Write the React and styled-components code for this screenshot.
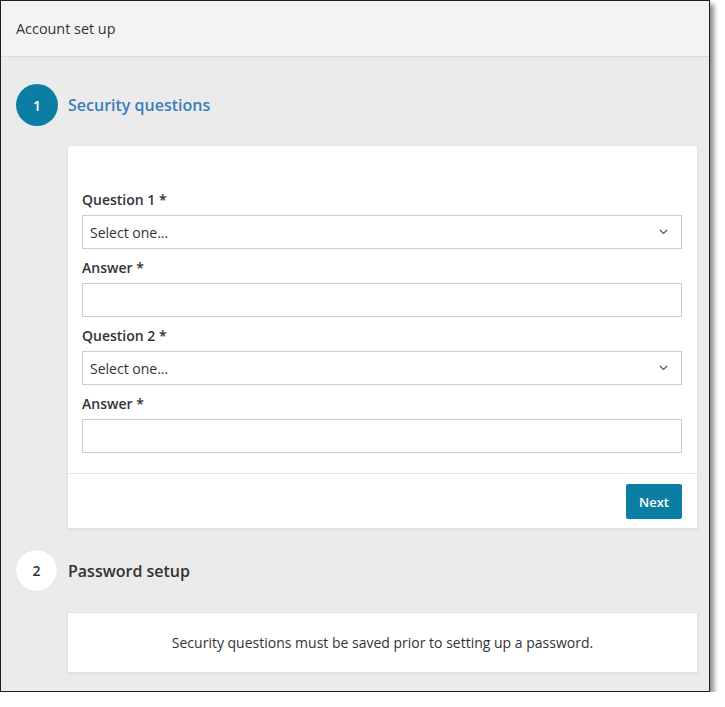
import React from 'react';
import styled, { createGlobalStyle } from 'styled-components';

const GlobalStyle = createGlobalStyle`
  body {
    margin: 0;
    background: #fff;
    font-family: "Open Sans", "Noto Sans", sans-serif;
    color: #333;
  }
`;

const Frame = styled.div`
  width: 708px;
  height: 690px;
  border: 1px solid #1e1e1e;
  background: #ebebeb;
  box-shadow: 4px 4px 5px rgba(0, 0, 0, 0.45);
  display: flex;
  flex-direction: column;
  overflow: hidden;
`;

const Header = styled.div`
  height: 55px;
  background: #f3f3f3;
  border-bottom: 1px solid #dadada;
  display: flex;
  align-items: center;
  padding: 0 15px;
  font-size: 14.4px;
  color: #333;
`;

const Content = styled.div`
  padding: 27px 11px 0 15px;
  display: flex;
  flex-direction: column;
`;

const StepHead = styled.div`
  display: flex;
  align-items: center;
  gap: ${p => (p.$active ? 10 : 11)}px;
  margin-top: ${p => p.$top || 0}px;
`;

const Circle = styled.div`
  width: ${p => (p.$active ? 42 : 41)}px;
  height: ${p => (p.$active ? 42 : 41)}px;
  border-radius: 50%;
  background: ${p => (p.$active ? '#0b7ea3' : '#fff')};
  color: ${p => (p.$active ? '#fff' : '#333')};
  box-shadow: ${p => (p.$active ? 'none' : '0 0 1px rgba(0,0,0,0.15)')};
  display: flex;
  align-items: center;
  justify-content: center;
  font-size: 14px;
  font-weight: 600;
  flex-shrink: 0;
`;

const StepTitle = styled.div`
  font-size: 16px;
  font-weight: 600;
  color: ${p => (p.$active ? '#3a7db8' : '#333')};
`;

const Card = styled.div`
  margin-left: 51px;
  margin-top: ${p => p.$top}px;
  background: #fff;
  border: 1px solid #e2e2e2;
  box-shadow: 0 1px 1px rgba(0, 0, 0, 0.05);
`;

const Body = styled.div`
  padding: 44px 15px 20px 14px;
  display: flex;
  flex-direction: column;
`;

const Label = styled.label`
  display: block;
  font-size: 14px;
  font-weight: 600;
  line-height: 20px;
  color: #333;
  margin-top: ${p => (p.$first ? 0 : 9)}px;
  margin-bottom: 5px;
`;

const Field = styled.div`
  height: 32px;
  border: 1px solid #cccccc;
  display: flex;
  align-items: center;
  justify-content: space-between;
  padding: 0 13px 0 7px;
  font-size: 14px;
  color: #333;
`;

const Footer = styled.div`
  border-top: 1px solid #e6e6e6;
  padding: 10px 15px 9px;
  display: flex;
  justify-content: flex-end;
`;

const Button = styled.button`
  width: 56px;
  height: 35px;
  background: #0b7ea3;
  color: #fff;
  border: none;
  border-radius: 2px;
  font-family: "Open Sans", sans-serif;
  font-size: 13px;
  font-weight: 600;
  cursor: pointer;
`;

const Notice = styled.div`
  height: 59px;
  display: flex;
  align-items: center;
  justify-content: center;
  font-size: 14px;
  color: #333;
`;

const Chevron = () => (
  <svg width="9" height="6" viewBox="0 0 9 6">
    <path d="M1 1 L4.5 4.5 L8 1" fill="none" stroke="#555" strokeWidth="1.2" />
  </svg>
);

const questions = [1, 2];

export default function App() {
  return (
    <>
      <GlobalStyle />
      <Frame>
        <Header>Account set up</Header>
        <Content>
          <StepHead $active>
            <Circle $active>1</Circle>
            <StepTitle $active>Security questions</StepTitle>
          </StepHead>
          <Card $top={19}>
            <Body>
              {questions.map((n, i) => (
                <React.Fragment key={n}>
                  <Label $first={i === 0}>Question {n} *</Label>
                  <Field>
                    <span>Select one...</span>
                    <Chevron />
                  </Field>
                  <Label>Answer *</Label>
                  <Field />
                </React.Fragment>
              ))}
            </Body>
            <Footer>
              <Button>Next</Button>
            </Footer>
          </Card>
          <StepHead $top={21}>
            <Circle>2</Circle>
            <StepTitle>Password setup</StepTitle>
          </StepHead>
          <Card $top={21}>
            <Notice>Security questions must be saved prior to setting up a password.</Notice>
          </Card>
        </Content>
      </Frame>
    </>
  );
}
